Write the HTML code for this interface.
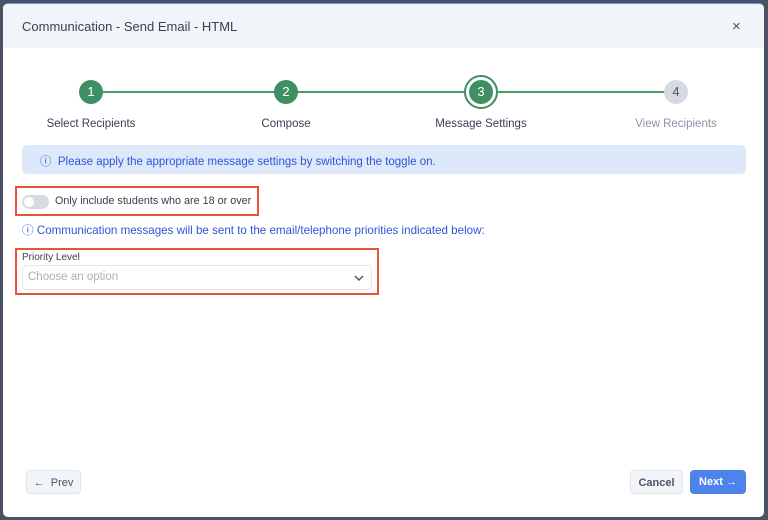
<!DOCTYPE html><html><head><style>
body{margin:0;width:768px;height:520px;background:#4b5265;font-family:"Liberation Sans",sans-serif;position:relative;overflow:hidden}
.m{position:absolute;left:3px;top:3px;width:761px;height:514px;background:#fff;border-radius:5px;overflow:hidden;border-top:1px solid #6b8fd8;box-sizing:border-box}
.h{position:absolute;left:0;top:0;right:0;height:44px;background:#f1f4f9}
.a{position:absolute}
.c{position:absolute;width:24px;height:24px;border-radius:50%;background:#3f8f63;color:#fff;font-size:13px;text-align:center;line-height:24px}
.l{position:absolute;font-size:11.5px;color:#374151;text-align:center;width:160px}
.btn{position:absolute;height:24px;border-radius:4px;font-size:11px;font-weight:bold;line-height:24px;text-align:center;box-sizing:border-box}
</style></head><body><div class="m">
<div class="h"><div class="a" style="left:19px;top:15px;font-size:13px;color:#374151">Communication - Send Email - HTML</div>
<div class="a" style="left:729px;top:14px;font-size:15px;color:#4b5563">×</div></div>
<div class="a" style="left:100px;top:87px;width:580px;height:2px;background:#4a9a6c"></div>
<div class="a" style="left:461px;top:71px;width:30px;height:30px;border:2px solid #3f8f63;border-radius:50%;background:#fff"></div>
<div class="c" style="left:76px;top:76px">1</div>
<div class="c" style="left:271px;top:76px">2</div>
<div class="c" style="left:466px;top:76px">3</div>
<div class="c" style="left:661px;top:76px;background:#d6dbe3;color:#4b5563">4</div>
<div class="l" style="left:8px;top:114px">Select Recipients</div>
<div class="l" style="left:203px;top:114px">Compose</div>
<div class="l" style="left:398px;top:114px">Message Settings</div>
<div class="l" style="left:593px;top:114px;color:#8a93a3">View Recipients</div>
<div class="a" style="left:19px;top:141px;width:724px;height:29px;background:#dde8fb;border-radius:5px"></div>
<div class="a" style="left:37px;top:149px;font-size:11.5px;color:#2f55d4">ⓘ&nbsp; Please apply the appropriate message settings by switching the toggle on.</div>
<div class="a" style="left:12px;top:182px;width:244px;height:30px;border:2px solid #e5533c;box-sizing:border-box"></div>
<div class="a" style="left:19px;top:191px;width:27px;height:14px;border-radius:7px;background:#d6dbe3"></div>
<div class="a" style="left:21px;top:193px;width:10px;height:10px;border-radius:50%;background:#fff"></div>
<div class="a" style="left:52px;top:191px;font-size:10.8px;color:#374151">Only include students who are 18 or over</div>
<div class="a" style="left:19px;top:218px;font-size:11.6px;color:#2f55d4">ⓘ Communication messages will be sent to the email/telephone priorities indicated below:</div>
<div class="a" style="left:12px;top:244px;width:364px;height:47px;border:2px solid #e5533c;box-sizing:border-box"></div>
<div class="a" style="left:19px;top:248px;font-size:10px;color:#374151">Priority Level</div>
<div class="a" style="left:19px;top:261px;width:350px;height:25px;border:1px solid #e2e6ec;border-radius:4px;box-sizing:border-box"></div>
<div class="a" style="left:25px;top:267px;font-size:11.5px;color:#a8afba">Choose an option</div>
<svg class="a" style="left:351px;top:270px" width="10" height="8"><path d="M1 2l4 4 4-4" fill="none" stroke="#4b5563" stroke-width="1.5"/></svg>
<div class="btn" style="left:23px;top:466px;width:55px;background:#f1f4f9;border:1px solid #e2e6ec;color:#4b5563;font-weight:normal">←&nbsp; Prev</div>
<div class="btn" style="left:627px;top:466px;width:53px;background:#f1f4f9;border:1px solid #e2e6ec;color:#4b5563">Cancel</div>
<div class="btn" style="left:687px;top:466px;width:56px;background:#4f83ec;color:#fff">Next →</div>
</div></body></html>
